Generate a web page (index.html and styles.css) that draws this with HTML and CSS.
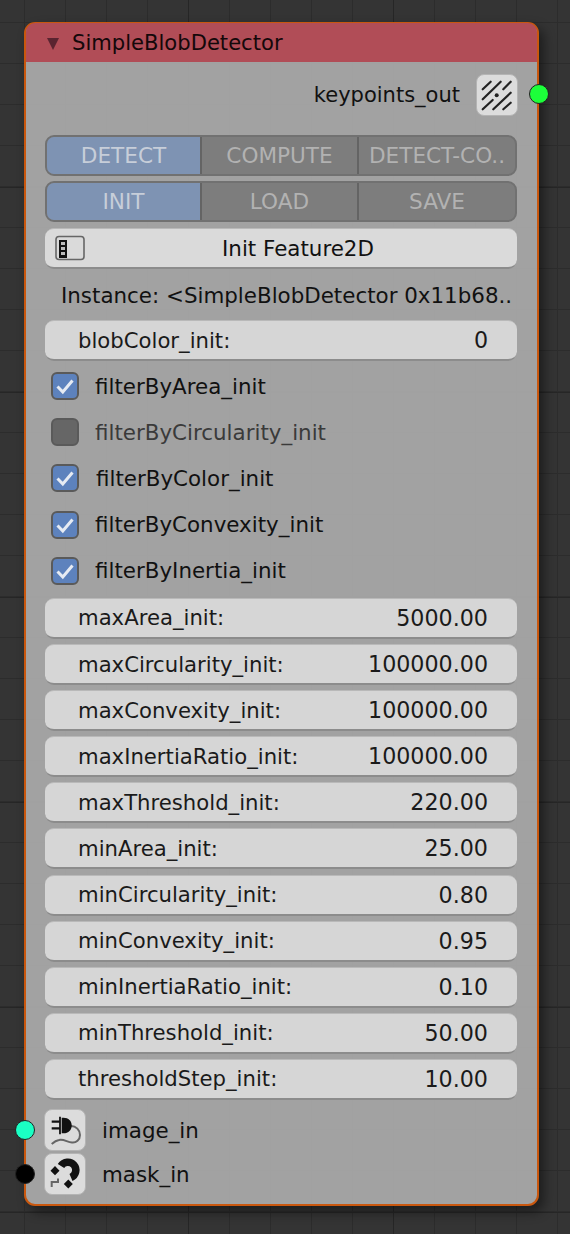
FILE: index.html
```html
<!DOCTYPE html>
<html lang="en">
<head>
  <meta charset="UTF-8">
  <title>SimpleBlobDetector</title>
  <link rel="stylesheet" href="styles.css">
</head>
<body>
  <div class="node">
    <div class="node-header">
      <span class="arrow"></span>
      <span>SimpleBlobDetector</span>
    </div>
    <div class="node-body">
      <div class="output-row">
        <span>keypoints_out</span>
        <div class="icon-btn">
          <svg viewBox="0 0 40 40" width="40" height="40">
            <g stroke="#222" stroke-width="2.2" stroke-linecap="round">
              <path d="M5.7 14.3L13.7 6.7"/>
              <path d="M26.3 14.3L33.7 6.7"/>
              <path d="M5.7 24.3L23.7 6.7"/>
              <path d="M5.7 34.3L15.7 25"/>
              <path d="M16.3 34.3L33.7 17.7"/>
              <path d="M26.3 34.3L33.7 27.7"/>
            </g>
            <circle cx="19.7" cy="20.3" r="2" fill="#222"/>
          </svg>
        </div>
        <span class="socket socket-out"></span>
      </div>

      <div class="tabs tabs-first">
        <div class="tab active">DETECT</div>
        <div class="tab">COMPUTE</div>
        <div class="tab">DETECT-CO..</div>
      </div>
      <div class="tabs tabs-second">
        <div class="tab active">INIT</div>
        <div class="tab">LOAD</div>
        <div class="tab">SAVE</div>
      </div>

      <div class="action-btn">
        <svg class="action-icon" viewBox="0 0 32 26" width="32" height="26">
          <rect x="2" y="1.5" width="28" height="23" rx="3" fill="none" stroke="#666" stroke-width="1.6"/>
          <rect x="5" y="5" width="8" height="18" fill="#111"/>
          <rect x="7" y="7" width="4" height="3" fill="#bbb"/>
          <rect x="7" y="12" width="4" height="3" fill="#bbb"/>
          <rect x="7" y="17" width="4" height="3" fill="#bbb"/>
        </svg>
        <span>Init Feature2D</span>
      </div>

      <div class="instance">Instance: &lt;SimpleBlobDetector 0x11b68..</div>

      <div class="field field-first"><span>blobColor_init:</span><span class="value">0</span></div>

      <div class="checks">
        <div class="check on"><span class="box"><svg viewBox="0 0 28 28" width="28" height="28"><path d="M6.5 14.5L11.8 20L21.5 8.5" fill="none" stroke="#e6ebf3" stroke-width="3"/></svg></span>filterByArea_init</div>
        <div class="check"><span class="box"></span>filterByCircularity_init</div>
        <div class="check on"><span class="box"><svg viewBox="0 0 28 28" width="28" height="28"><path d="M6.5 14.5L11.8 20L21.5 8.5" fill="none" stroke="#e6ebf3" stroke-width="3"/></svg></span><span class="nudge">filterByColor_init</span></div>
        <div class="check on"><span class="box"><svg viewBox="0 0 28 28" width="28" height="28"><path d="M6.5 14.5L11.8 20L21.5 8.5" fill="none" stroke="#e6ebf3" stroke-width="3"/></svg></span>filterByConvexity_init</div>
        <div class="check on"><span class="box"><svg viewBox="0 0 28 28" width="28" height="28"><path d="M6.5 14.5L11.8 20L21.5 8.5" fill="none" stroke="#e6ebf3" stroke-width="3"/></svg></span>filterByInertia_init</div>
      </div>

      <div class="fields">
        <div class="field"><span>maxArea_init:</span><span class="value">5000.00</span></div>
        <div class="field"><span>maxCircularity_init:</span><span class="value">100000.00</span></div>
        <div class="field"><span>maxConvexity_init:</span><span class="value">100000.00</span></div>
        <div class="field"><span>maxInertiaRatio_init:</span><span class="value">100000.00</span></div>
        <div class="field"><span>maxThreshold_init:</span><span class="value">220.00</span></div>
        <div class="field"><span>minArea_init:</span><span class="value">25.00</span></div>
        <div class="field"><span>minCircularity_init:</span><span class="value">0.80</span></div>
        <div class="field"><span>minConvexity_init:</span><span class="value">0.95</span></div>
        <div class="field"><span>minInertiaRatio_init:</span><span class="value">0.10</span></div>
        <div class="field"><span>minThreshold_init:</span><span class="value">50.00</span></div>
        <div class="field"><span>thresholdStep_init:</span><span class="value">10.00</span></div>
      </div>

      <div class="input-row input-image">
        <span class="socket socket-image"></span>
        <div class="icon-btn">
          <svg viewBox="0 0 40 40" width="40" height="40">
            <path d="M26 16C31 16 35 20 35 25C35 30 31 33 27 32.5C22 32 19 29 14 30C11 30.5 9 32 6.7 34" fill="none" stroke="#666" stroke-width="2"/>
            <path d="M16.7 7.7H18.5C23.5 7.7 26.7 11 26.7 15.5C26.7 20 23.5 23.3 18.5 23.3H16.7Z" fill="#111"/>
            <path d="M15 6.7V24.3" stroke="#111" stroke-width="1.8"/>
            <path d="M6.7 11.7H15M6.7 18.3H15" stroke="#111" stroke-width="2.2"/>
          </svg>
        </div>
        <span>image_in</span>
      </div>
      <div class="input-row input-mask">
        <span class="socket socket-mask"></span>
        <div class="icon-btn">
          <svg viewBox="0 0 40 40" width="40" height="40">
            <path d="M16 12A8 8 0 1 1 26 23.5" fill="none" stroke="#111" stroke-width="7.5"/>
            <path d="M10 12L14.5 16.7L10 21.2L5.5 16.7Z" fill="#111"/>
            <path d="M23.3 25.5L27.8 30L23.3 34.5L18.8 30Z" fill="#111"/>
            <path d="M6.7 33V28H13V24.5" fill="none" stroke="#666" stroke-width="2"/>
          </svg>
        </div>
        <span>mask_in</span>
      </div>
    </div>
  </div>
</body>
</html>
```

FILE: styles.css
```css
/* Node editor canvas */
html, body {
  margin: 0;
  padding: 0;
}
body {
  width: 570px;
  height: 1234px;
  overflow: hidden;
  font-family: "DejaVu Sans", sans-serif;
  font-size: 21.4px;
  color: #111;
  background-color: #343434;
  background-image:
    linear-gradient(#262626 1px, transparent 1px),
    linear-gradient(90deg, #262626 1px, transparent 1px),
    linear-gradient(#2c2c2c 1px, transparent 1px),
    linear-gradient(90deg, #2c2c2c 1px, transparent 1px);
  background-size: 205px 205px, 205px 205px, 41px 41px, 41px 41px;
  background-position: 0 187px, 188px 0, 0 22px, 24px 0;
  padding-top: 22px;
  box-sizing: border-box;
}

/* Node */
.node {
  position: relative;
  width: 515px;
  height: 1184px;
  margin-left: 24px;
  box-sizing: border-box;
  border: 2px solid #c9570e;
  border-radius: 11px;
  background-color: rgba(169, 169, 169, 0.94);
  box-shadow: 5px 6px 12px rgba(0, 0, 0, 0.45);
}
.node-header {
  display: flex;
  align-items: center;
  gap: 13px;
  height: 39px;
  margin-top: -1px;
  padding-left: 21px;
  border-radius: 9px 9px 0 0;
  background-color: #b14d57;
  font-size: 21.1px;
  color: #14080a;
}
.arrow {
  width: 0;
  height: 0;
  margin-top: 2px;
  border-left: 6.5px solid transparent;
  border-right: 6.5px solid transparent;
  border-top: 12px solid #5a2430;
}
.node-body {
  padding: 12px 20px 0 19px;
}

/* Sockets */
.socket {
  position: absolute;
  width: 18px;
  height: 18px;
  border: 1px solid #222;
  border-radius: 50%;
}
.socket-out {
  right: -12px;
  top: 60px;
  background-color: #1cff3a;
}
.socket-image {
  left: -11px;
  top: 1096px;
  background-color: #1affc4;
}
.socket-mask {
  left: -11px;
  top: 1140px;
  background-color: #000;
}

/* Icon buttons */
.icon-btn {
  width: 40px;
  height: 40px;
  flex: none;
  border: 1px solid #b4b4b4;
  border-radius: 8px;
  background-color: #dcdcdc;
  box-sizing: content-box;
  margin: -1px;
}
.icon-btn svg {
  display: block;
}
.output-row {
  display: flex;
  justify-content: flex-end;
  align-items: center;
  gap: 17px;
  height: 41px;
  font-size: 21px;
}

/* Tabs */
.tabs {
  display: grid;
  grid-template-columns: 153px 157px 1fr;
  height: 41px;
  box-sizing: border-box;
  border: 2px solid #717171;
  border-radius: 9px;
  overflow: hidden;
  background-color: #7d7d7d;
  color: #b2b2b2;
  font-size: 21.6px;
}
.tabs-first {
  margin-top: 20px;
}
.tabs-second {
  margin-top: 5px;
}
.tab {
  display: flex;
  align-items: center;
  justify-content: center;
  border-left: 2px solid #646464;
  white-space: nowrap;
}
.tab:first-child {
  border-left: none;
}
.tab.active {
  background-color: #7e93b3;
  color: #c7ced9;
}

/* Buttons and text fields */
.action-btn {
  position: relative;
  display: flex;
  align-items: center;
  justify-content: center;
  height: 41px;
  margin-top: 6px;
  padding-left: 34px;
  box-sizing: border-box;
  border-radius: 9px;
  border-top: 1px solid #b9b9b9;
  border-bottom: 2px solid #8c8c8c;
  background-color: #dadada;
}
.action-icon {
  position: absolute;
  left: 9px;
  top: 6px;
}
.instance {
  height: 51px;
  line-height: 53px;
  padding-left: 16px;
  white-space: nowrap;
}
.field {
  display: flex;
  justify-content: space-between;
  align-items: center;
  height: 41px;
  padding: 0 29px 0 33px;
  box-sizing: border-box;
  border-radius: 9px;
  border-top: 1px solid #b9b9b9;
  border-bottom: 2px solid #8c8c8c;
  background-color: #d6d6d6;
  color: #1a1a1a;
  font-size: 21.2px;
}
.value {
  font-size: 22.2px;
}
.fields {
  display: flex;
  flex-direction: column;
  gap: 5.1px;
  margin-top: 4px;
}

/* Checkboxes */
.checks {
  display: flex;
  flex-direction: column;
  margin-top: 2px;
}
.check {
  display: flex;
  align-items: center;
  gap: 16px;
  height: 46.2px;
  padding-left: 6px;
  color: #3a3a3a;
}
.check.on {
  color: #111;
}
.nudge {
  margin-left: 1px;
}
.box {
  width: 28px;
  height: 28px;
  flex: none;
  box-sizing: border-box;
  border: 2px solid #5a5a5a;
  border-radius: 6px;
  background-color: #666;
}
.box svg {
  display: block;
  margin: -2px;
}
.check.on .box {
  background-color: #5d82bd;
}

/* Input rows */
.input-row {
  display: flex;
  align-items: center;
  gap: 17px;
  height: 41px;
}
.input-image {
  margin-top: 10px;
}
.input-mask {
  margin-top: 3px;
}
```
